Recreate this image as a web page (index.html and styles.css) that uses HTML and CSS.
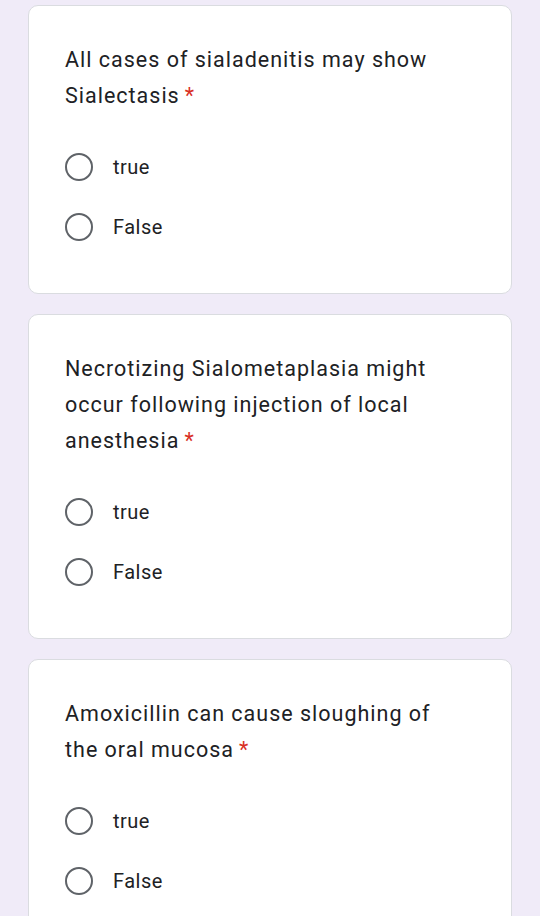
FILE: index.html
```html
<!DOCTYPE html>
<html lang="en">
<head>
<meta charset="utf-8">
<title>Form</title>
<link rel="stylesheet" href="styles.css">
</head>
<body>
<main class="form">
  <section class="card">
    <div class="question">All cases of sialadenitis may show Sialectasis<span class="req">*</span></div>
    <div class="options">
      <label class="option"><span class="radio"></span><span class="label">true</span></label>
      <label class="option"><span class="radio"></span><span class="label">False</span></label>
    </div>
  </section>
  <section class="card">
    <div class="question">Necrotizing Sialometaplasia might occur following injection of local anesthesia<span class="req">*</span></div>
    <div class="options">
      <label class="option"><span class="radio"></span><span class="label">true</span></label>
      <label class="option"><span class="radio"></span><span class="label">False</span></label>
    </div>
  </section>
  <section class="card">
    <div class="question">Amoxicillin can cause sloughing of the oral mucosa<span class="req">*</span></div>
    <div class="options">
      <label class="option"><span class="radio"></span><span class="label">true</span></label>
      <label class="option"><span class="radio"></span><span class="label">False</span></label>
    </div>
  </section>
</main>
</body>
</html>
```

FILE: styles.css
```css
html, body {
  margin: 0;
  padding: 0;
  background: #f0ebf8;
}

body {
  font-family: Roboto, "Noto Sans", "Liberation Sans", sans-serif;
  color: #202124;
}

.form {
  display: flex;
  flex-direction: column;
  gap: 20px;
  padding: 5px 28px 0 28px;
}

.card {
  background: #ffffff;
  border: 1px solid #dadce0;
  border-radius: 10px;
  padding: 36px 36px 36px 36px;
  display: flex;
  flex-direction: column;
  gap: 23px;
}

.question {
  font-size: 21.5px;
  line-height: 36px;
  letter-spacing: 1px;
  width: 392px;
}

.req {
  color: #d93025;
  margin-left: 5px;
  letter-spacing: 0;
}

.options {
  display: flex;
  flex-direction: column;
}

.option {
  height: 60px;
  display: flex;
  align-items: center;
  gap: 20px;
}

.radio {
  width: 28px;
  height: 28px;
  box-sizing: border-box;
  border: 2.8px solid #5f6368;
  border-radius: 50%;
  flex: none;
}

.label {
  font-size: 20px;
  letter-spacing: 0.5px;
}
```
